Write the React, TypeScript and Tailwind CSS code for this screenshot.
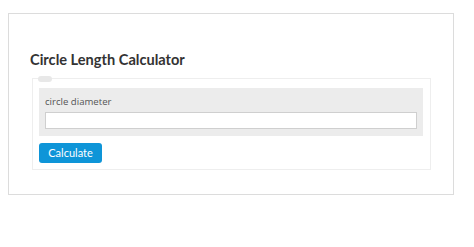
import React from "react";

export default function App() {
  return (
    <div className="w-[474px] h-[247px] bg-white pt-[13px] pl-[8px]">
      <div className="w-[446px] h-[182px] border border-[#dcdcdc] pt-[36px] pl-[21px] pr-[22px]">
        <h1
          className="text-[14.6px] font-bold text-[#333] leading-[20px] m-0"
          style={{ fontFamily: 'Lato, sans-serif' }}
        >
          Circle Length Calculator
        </h1>
        <div className="relative mt-[8px] ml-[2px] w-[399px] h-[92px] border border-[#eeeeee] pt-[9px] px-[6px]">
          <div className="absolute left-[5px] -top-[3px] w-[14px] h-[6px] rounded-full bg-[#e8e8e8]" />
          <div className="bg-[#ececec] w-[384px] h-[48px] pt-[7px] px-[6px]">
            <div
              className="text-[9.6px] text-[#555] leading-[14px]"
              style={{ fontFamily: '"Open Sans", sans-serif' }}
            >
              circle diameter
            </div>
            <div className="mt-[3px] w-[372px] h-[17px] bg-white border border-[#cfcfcf]" />
          </div>
          <button
            className="mt-[7px] w-[63px] h-[20px] rounded-[3px] bg-[#0e95d8] text-white text-[11px] leading-[20px]"
            style={{ fontFamily: 'Lato, sans-serif' }}
          >
            Calculate
          </button>
        </div>
      </div>
    </div>
  );
}
